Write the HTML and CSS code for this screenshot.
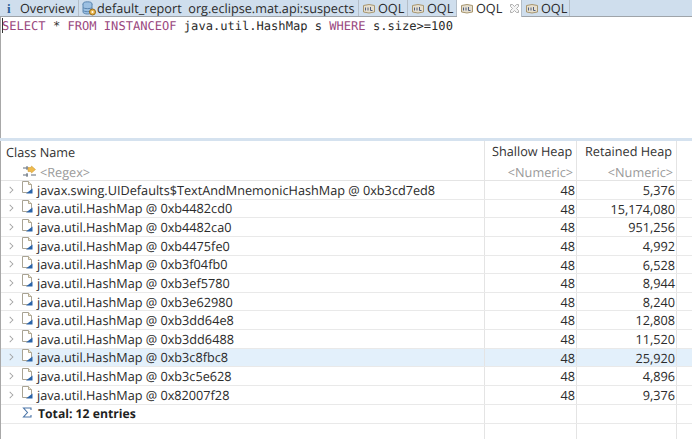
FILE: index.html
```html
<!DOCTYPE html>
<html lang="en">
<head>
<meta charset="utf-8">
<title>OQL</title>
<link rel="stylesheet" href="styles.css">
</head>
<body>
<svg class="defs" width="0" height="0" aria-hidden="true">
  <defs>
    <symbol id="oql" viewBox="0 0 12 12">
      <path d="M.5 3.500 6 2.500l5.500 1V10L6 11 .5 10z" fill="#e6dfcf" stroke="#a8966f" stroke-width="1"/>
      <path d="M2.500 5.500v3M5 5.500v3M7.500 5v3.500h2" fill="none" stroke="#4f5f80" stroke-width="1"/>
    </symbol>
    <symbol id="obj" viewBox="0 0 12 13">
      <path d="M1.500.5h6l3 3v8h-9z" fill="#fff" stroke="#a8a394"/>
      <path d="M7.500.5v3h3" fill="#efe9d8" stroke="#b3a98f"/>
      <path d="M11.500 7.500v5H5z" fill="#2a63a8"/>
    </symbol>
  </defs>
</svg>
<div class="tabs">
  <div class="tab tab-overview"><span class="info">i</span>Overview</div>
  <div class="tab tab-report">
    <svg class="db" viewBox="0 0 14 15" width="14" height="15">
      <ellipse cx="5.500" cy="3" rx="4.500" ry="2.200" fill="#9cc0e2" stroke="#5b86b0"/>
      <path d="M1 3v8c0 1.200 2 2 4.500 2s4.500-.8 4.500-2V3" fill="#9cc0e2" stroke="#5b86b0"/>
      <path d="M1 6.500c1 1.500 8 1.500 9 0M1 9.500c1 1.500 8 1.500 9 0" fill="none" stroke="#5b86b0"/>
      <circle cx="10.500" cy="11" r="3" fill="#e8b54a" stroke="#96681a"/>
      <circle cx="10.500" cy="11" r="1" fill="#fff"/>
    </svg>default_report&nbsp; org.eclipse.mat.api:suspects</div>
  <div class="tab tab-oql"><svg class="ic"><use href="#oql"/></svg>OQL</div>
  <div class="tab tab-oql"><svg class="ic"><use href="#oql"/></svg>OQL</div>
  <div class="tab tab-active"><svg class="ic"><use href="#oql"/></svg>OQL<span class="close">
    <svg viewBox="0 0 11 11" width="11" height="11"><path d="M1.500 1.500h2l2 2 2-2h2v2l-2 2 2 2v2h-2l-2-2-2 2h-2v-2l2-2-2-2z" fill="#f4f4f4" stroke="#b0b0b0"/></svg></span></div>
  <div class="tab tab-oql tab-end"><svg class="ic"><use href="#oql"/></svg>OQL</div>
</div>
<div class="editor"><span class="caret"></span><span class="kw">SELECT</span> * <span class="kw">FROM</span> <span class="kw">INSTANCEOF</span> java.util.HashMap s <span class="kw">WHERE</span> s.size&gt;=100</div>
<div class="sash"></div>
<div class="table">
  <div class="row head"><div class="c c1">Class Name</div><div class="c c2">Shallow Heap</div><div class="c c3">Retained Heap</div><div class="c c4"></div></div>
  <div class="row filter">
    <div class="c c1"><svg class="fi" viewBox="0 0 13 13" width="13" height="13"><path d="M0 3h5M0 10h5M8 10h5M4 1v4M4 8v4" stroke="#5f6b78" fill="none"/><path d="M5 2.500h3l.5-1.500 4 3.500-4 3.500-.5-1.500H5z" fill="#efbb4e" stroke="#c8952e" stroke-width=".5"/></svg><span class="rx">&lt;Regex&gt;</span></div>
    <div class="c c2 rx">&lt;Numeric&gt;</div><div class="c c3 rx">&lt;Numeric&gt;</div><div class="c c4"></div></div>
  <div class="row"><div class="c c1"><span class="tw"></span><svg class="ob"><use href="#obj"/></svg>javax.swing.UIDefaults$TextAndMnemonicHashMap @ 0xb3cd7ed8</div><div class="c c2">48</div><div class="c c3">5,376</div><div class="c c4"></div></div>
  <div class="row"><div class="c c1"><span class="tw"></span><svg class="ob"><use href="#obj"/></svg>java.util.HashMap @ 0xb4482cd0</div><div class="c c2">48</div><div class="c c3">15,174,080</div><div class="c c4"></div></div>
  <div class="row"><div class="c c1"><span class="tw"></span><svg class="ob"><use href="#obj"/></svg>java.util.HashMap @ 0xb4482ca0</div><div class="c c2">48</div><div class="c c3">951,256</div><div class="c c4"></div></div>
  <div class="row"><div class="c c1"><span class="tw"></span><svg class="ob"><use href="#obj"/></svg>java.util.HashMap @ 0xb4475fe0</div><div class="c c2">48</div><div class="c c3">4,992</div><div class="c c4"></div></div>
  <div class="row"><div class="c c1"><span class="tw"></span><svg class="ob"><use href="#obj"/></svg>java.util.HashMap @ 0xb3f04fb0</div><div class="c c2">48</div><div class="c c3">6,528</div><div class="c c4"></div></div>
  <div class="row"><div class="c c1"><span class="tw"></span><svg class="ob"><use href="#obj"/></svg>java.util.HashMap @ 0xb3ef5780</div><div class="c c2">48</div><div class="c c3">8,944</div><div class="c c4"></div></div>
  <div class="row"><div class="c c1"><span class="tw"></span><svg class="ob"><use href="#obj"/></svg>java.util.HashMap @ 0xb3e62980</div><div class="c c2">48</div><div class="c c3">8,240</div><div class="c c4"></div></div>
  <div class="row"><div class="c c1"><span class="tw"></span><svg class="ob"><use href="#obj"/></svg>java.util.HashMap @ 0xb3dd64e8</div><div class="c c2">48</div><div class="c c3">12,808</div><div class="c c4"></div></div>
  <div class="row"><div class="c c1"><span class="tw"></span><svg class="ob"><use href="#obj"/></svg>java.util.HashMap @ 0xb3dd6488</div><div class="c c2">48</div><div class="c c3">11,520</div><div class="c c4"></div></div>
  <div class="row sel"><div class="c c1"><span class="tw"></span><svg class="ob"><use href="#obj"/></svg>java.util.HashMap @ 0xb3c8fbc8</div><div class="c c2">48</div><div class="c c3">25,920</div><div class="c c4"></div></div>
  <div class="row"><div class="c c1"><span class="tw"></span><svg class="ob"><use href="#obj"/></svg>java.util.HashMap @ 0xb3c5e628</div><div class="c c2">48</div><div class="c c3">4,896</div><div class="c c4"></div></div>
  <div class="row"><div class="c c1"><span class="tw"></span><svg class="ob"><use href="#obj"/></svg>java.util.HashMap @ 0x82007f28</div><div class="c c2">48</div><div class="c c3">9,376</div><div class="c c4"></div></div>
  <div class="row total"><div class="c c1"><svg class="sigma" viewBox="0 0 10 11" width="10" height="11"><path d="M9 3V1H1.500L5.500 5.500 1.500 10H9V8" fill="none" stroke="#4a75a8" stroke-width="1.100"/></svg><b>Total: 12 entries</b></div><div class="c c2"></div><div class="c c3"></div><div class="c c4"></div></div>
  <div class="row last"><div class="c c1"></div><div class="c c2"></div><div class="c c3"></div><div class="c c4"></div></div>
</div>
</body>
</html>
```
FILE: styles.css
```css
html, body { margin: 0; padding: 0; height: 100%; overflow: hidden; background: #fff; }
body { width: 692px; height: 439px; font-family: "Open Sans", sans-serif; font-size: 12.7px; text-rendering: geometricPrecision; color: #2b2b2b; }
.defs { position: absolute; }

.tabs { display: flex; height: 16px; background: #cfdeed; border-bottom: 1px solid #9fa4a9; line-height: 15px; white-space: nowrap; }
.tab { display: flex; align-items: center; height: 16px; border-right: 1px solid #b4bec8; box-sizing: border-box; flex: none; }
.tab-overview { width: 79px; padding-left: 7px; }
.info { width: 13px; color: #2c5e96; font-family: "Liberation Serif", serif; font-weight: 700; font-size: 13px; }
.tab-report { width: 280px; padding-left: 3px; }
.db { margin-right: 1px; flex: none; }
.tab-oql { width: 49px; padding-left: 4px; }
.tab-end { width: 48px; }
.ic { width: 12px; height: 12px; margin-right: 3px; flex: none; }
.tab-active { width: 65px; padding-left: 4px; background: #fff; height: 17px; padding-bottom: 1px; }
.close { margin-left: 7px; display: flex; }

.editor { height: 121px; padding: 2px 0 0 1px; box-sizing: border-box; position: relative; font-family: "DejaVu Sans Mono", monospace; font-size: 12.08px; line-height: 14px; color: #2a2a2a; white-space: pre; border-left: 1px solid #a8a8a8; }
.kw { color: #9a4880; }
.caret { position: absolute; left: 1px; top: 1px; width: 1px; height: 15px; background: #333; }

.sash { height: 3px; background: #d5e2ef; }

.table { height: 298px; border-left: 1px solid #a8a8a8; overflow: hidden; }
.row { display: flex; height: 18.64px; box-sizing: border-box; border-bottom: 1px solid #e9e9e9; line-height: 18px; white-space: nowrap; }
.c { box-sizing: border-box; height: 100%; border-right: 1px solid #e4e4e4; flex: none; }
.c1 { width: 484px; padding-left: 6px; display: flex; align-items: center; }
.c2 { width: 92px; text-align: right; padding-right: 1px; }
.c3 { width: 100px; text-align: right; padding-right: 1px; }
.c4 { flex: 1; border-right: 0; }

.head { height: 22px; border-bottom: 0; line-height: 21px; color: #333; }
.head .c1 { padding-left: 5px; }
.head .c2, .head .c3 { text-align: left; padding-left: 7px; }
.head .c3 { padding-left: 8px; }
.filter { height: 18px; border-bottom: 1px solid #e4e4e4; line-height: 18px; }
.filter .c2, .filter .c3 { padding-right: 3px; }
.rx { color: #9a9a9a; }
.fi { margin: 0 4px 0 16px; flex: none; }

.tw { width: 5px; height: 5px; margin: 0 8px 0 0; border-top: 1px solid #a0a0a0; border-right: 1px solid #a0a0a0; transform: rotate(45deg) scale(.8); flex: none; }
.ob { width: 12px; height: 13px; margin-right: 4px; flex: none; position: relative; top: -2px; }
.sel { background: #e3f0fb; }
.total { height: 19px; }
.sigma { margin: -2px 6px 0 15px; flex: none; }
.total b { font-weight: 700; font-size: 12.2px; color: #1f1f1f; }
.last { height: 40px; border-bottom: 0; }
```
